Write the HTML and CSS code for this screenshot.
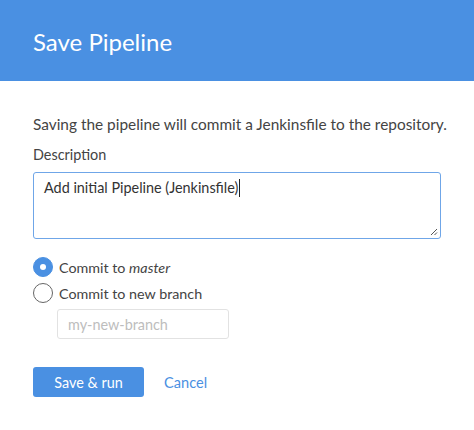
FILE: index.html
```html
<!DOCTYPE html>
<html>
<head>
<meta charset="utf-8">
<link rel="stylesheet" href="styles.css">
</head>
<body>
<div class="dialog">
  <div class="header"><h1 class="title">Save Pipeline</h1></div>
  <div class="content">
    <p class="intro">Saving the pipeline will commit a Jenkinsfile to the repository.</p>
    <div class="label">Description</div>
    <div class="textarea">
      <span class="value">Add initial Pipeline (Jenkinsfile)</span><span class="caret"></span>
      <svg class="grip" width="8" height="8" viewBox="0 0 8 8"><path d="M1 7 L7 1 M4.5 7 L7 4.5" stroke="#555" stroke-width="1"/></svg>
    </div>
    <div class="radio-row first">
      <span class="radio checked"></span>
      <span class="radio-label">Commit to <em>master</em></span>
    </div>
    <div class="radio-row">
      <span class="radio"></span>
      <span class="radio-label">Commit to new branch</span>
    </div>
    <div class="branch-input"><span class="placeholder">my-new-branch</span></div>
    <div class="actions">
      <button class="btn-primary">Save &amp; run</button>
      <a class="btn-link">Cancel</a>
    </div>
  </div>
</div>
</body>
</html>
```
FILE: styles.css
```css
html, body {
  margin: 0;
  padding: 0;
  background: #fff;
}
body {
  font-family: Lato, "Open Sans", sans-serif;
  color: #444;
  width: 474px;
  height: 430px;
  overflow: hidden;
}
.header {
  background: #4a90e2;
  height: 81px;
  display: flex;
  align-items: center;
  padding-left: 33px;
}
.title {
  margin: 0;
  color: #fff;
  font-weight: 400;
  font-size: 24px;
  line-height: 30px;
  padding-top: 2px;
}
.content {
  padding: 0 33px;
}
.intro {
  margin: 33px 0 0;
  font-size: 15.4px;
  line-height: 20px;
  white-space: nowrap;
}
.label {
  margin-top: 11px;
  font-size: 14.4px;
  line-height: 20px;
}
.textarea {
  position: relative;
  margin-top: 7px;
  box-sizing: border-box;
  width: 408px;
  height: 67px;
  border: 1px solid #6fa6e8;
  border-radius: 3px;
  padding: 5px 10px;
  font-size: 14.4px;
  line-height: 20px;
  color: #333;
}
.caret {
  display: inline-block;
  width: 1px;
  height: 18px;
  background: #222;
  vertical-align: -4px;
  margin-left: 1px;
}
.grip {
  position: absolute;
  right: 2px;
  bottom: 2px;
}
.radio-row {
  display: flex;
  align-items: center;
  height: 20px;
  margin-top: 6px;
  font-size: 14.3px;
}
.radio-row.first {
  margin-top: 18px;
}
.radio {
  box-sizing: border-box;
  width: 20px;
  height: 20px;
  border-radius: 50%;
  border: 1px solid #666;
  margin-right: 6px;
  display: flex;
  align-items: center;
  justify-content: center;
}
.radio.checked {
  background: #4a90e2;
  border-color: #4a90e2;
}
.radio.checked::after {
  content: "";
  width: 6px;
  height: 6px;
  border-radius: 50%;
  background: #fff;
}
.radio-label em {
  font-style: italic;
}
.branch-input {
  margin: 6px 0 0 24px;
  box-sizing: border-box;
  width: 172px;
  height: 30px;
  border: 1px solid #e2e2e2;
  border-radius: 3px;
  padding: 0 10px;
  display: flex;
  align-items: center;
  font-size: 14.4px;
}
.placeholder {
  color: #bdbdbd;
}
.actions {
  margin-top: 28px;
  display: flex;
  align-items: center;
  gap: 20px;
}
.btn-primary {
  box-sizing: border-box;
  width: 111px;
  height: 30px;
  border: none;
  border-radius: 3px;
  background: #4a90e2;
  color: #fff;
  font-family: Lato, sans-serif;
  font-size: 14.4px;
  padding: 0;
}
.btn-link {
  color: #4a90e2;
  font-size: 14.6px;
}
```
